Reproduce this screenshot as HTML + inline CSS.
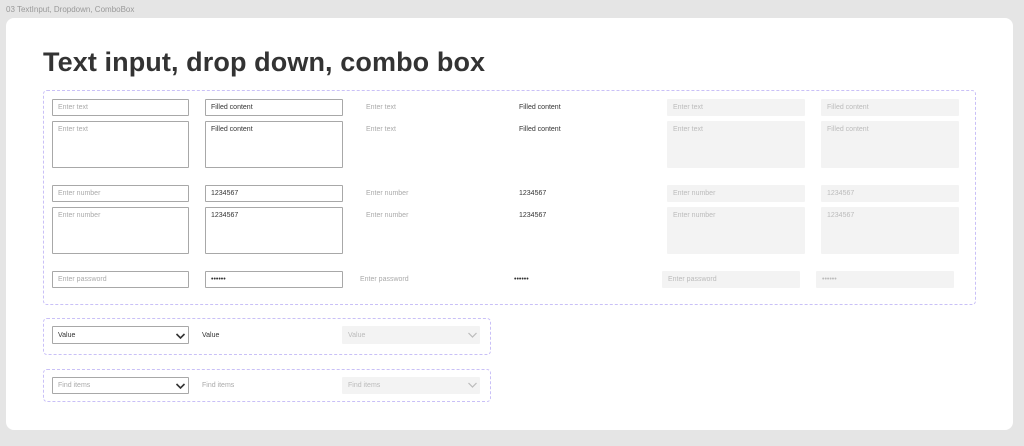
<!DOCTYPE html>
<html><head><meta charset="utf-8"><style>
*{margin:0;padding:0;box-sizing:border-box}
body{width:1024px;height:446px;background:#e5e5e5;position:relative;overflow:hidden;font-family:"Liberation Sans",sans-serif}
.cap{position:absolute;left:6px;top:5px;font-size:8px;color:#999}
.card{position:absolute;left:6px;top:18px;width:1007px;height:412px;background:#fff;border-radius:8px}
h1{position:absolute;left:43px;top:47px;font-size:27px;font-weight:bold;color:#333;letter-spacing:0.1px}
.box{position:absolute;border:1px dashed #c9c0f7;border-radius:4px}
.i{position:absolute;border:1px solid #a8a8a8;border-radius:1px;font-size:7px;color:#aaa;padding:4px 5px;line-height:7px;background:#fff}
.i.f{color:#333}
.d{border:none;background:#f3f3f3;color:#bbb;padding:5px 6px}
.t{position:absolute;font-size:7px;color:#aaa;line-height:7px}
.t.f{color:#333}
.i svg{position:absolute;right:2px;top:4px}
.dd{padding-top:5px}
.d.dd{padding-top:6px}
</style></head><body>
<div class="cap">03 TextInput, Dropdown, ComboBox</div>
<div class="card"></div>
<h1>Text input, drop down, combo box</h1>
<div class="box" style="left:43px;top:90px;width:933px;height:215px"></div>
<div class="box" style="left:43px;top:318px;width:448px;height:37px"></div>
<div class="box" style="left:43px;top:369px;width:448px;height:33px"></div>

<div class="i" style="left:52px;top:99px;width:137px;height:17px">Enter text</div>
<div class="i f" style="left:205px;top:99px;width:138px;height:17px">Filled content</div>
<div class="t" style="left:366px;top:104px">Enter text</div>
<div class="t f" style="left:519px;top:104px">Filled content</div>
<div class="i d" style="left:667px;top:99px;width:138px;height:17px">Enter text</div>
<div class="i d" style="left:821px;top:99px;width:138px;height:17px">Filled content</div>

<div class="i" style="left:52px;top:121px;width:137px;height:47px">Enter text</div>
<div class="i f" style="left:205px;top:121px;width:138px;height:47px">Filled content</div>
<div class="t" style="left:366px;top:126px">Enter text</div>
<div class="t f" style="left:519px;top:126px">Filled content</div>
<div class="i d" style="left:667px;top:121px;width:138px;height:47px">Enter text</div>
<div class="i d" style="left:821px;top:121px;width:138px;height:47px">Filled content</div>

<div class="i" style="left:52px;top:185px;width:137px;height:17px">Enter number</div>
<div class="i f" style="left:205px;top:185px;width:138px;height:17px">1234567</div>
<div class="t" style="left:366px;top:190px">Enter number</div>
<div class="t f" style="left:519px;top:190px">1234567</div>
<div class="i d" style="left:667px;top:185px;width:138px;height:17px">Enter number</div>
<div class="i d" style="left:821px;top:185px;width:138px;height:17px">1234567</div>

<div class="i" style="left:52px;top:207px;width:137px;height:47px">Enter number</div>
<div class="i f" style="left:205px;top:207px;width:138px;height:47px">1234567</div>
<div class="t" style="left:366px;top:212px">Enter number</div>
<div class="t f" style="left:519px;top:212px">1234567</div>
<div class="i d" style="left:667px;top:207px;width:138px;height:47px">Enter number</div>
<div class="i d" style="left:821px;top:207px;width:138px;height:47px">1234567</div>

<div class="i" style="left:52px;top:271px;width:137px;height:17px">Enter password</div>
<div class="i f" style="left:205px;top:271px;width:138px;height:17px">••••••</div>
<div class="t" style="left:360px;top:276px">Enter password</div>
<div class="t f" style="left:514px;top:276px">••••••</div>
<div class="i d" style="left:662px;top:271px;width:138px;height:17px">Enter password</div>
<div class="i d" style="left:816px;top:271px;width:138px;height:17px">••••••</div>

<div class="i f dd" style="left:52px;top:326px;width:137px;height:18px">Value<svg width="11" height="8" viewBox="0 0 11 8" style="top:5px"><path d="M1.5 2l4 4 4-4" fill="none" stroke="#333" stroke-width="1.6"/></svg></div>
<div class="t f" style="left:202px;top:332px">Value</div>
<div class="i d dd" style="left:342px;top:326px;width:138px;height:18px">Value<svg width="11" height="8" viewBox="0 0 11 8" style="top:5px"><path d="M1.5 2l4 4 4-4" fill="none" stroke="#bbb" stroke-width="1.2"/></svg></div>

<div class="i" style="left:52px;top:377px;width:137px;height:17px">Find items<svg width="11" height="8" viewBox="0 0 11 8"><path d="M1.5 2l4 4 4-4" fill="none" stroke="#333" stroke-width="1.6"/></svg></div>
<div class="t" style="left:202px;top:382px">Find items</div>
<div class="i d" style="left:342px;top:377px;width:138px;height:17px">Find items<svg width="11" height="8" viewBox="0 0 11 8"><path d="M1.5 2l4 4 4-4" fill="none" stroke="#bbb" stroke-width="1.2"/></svg></div>
</body></html>
